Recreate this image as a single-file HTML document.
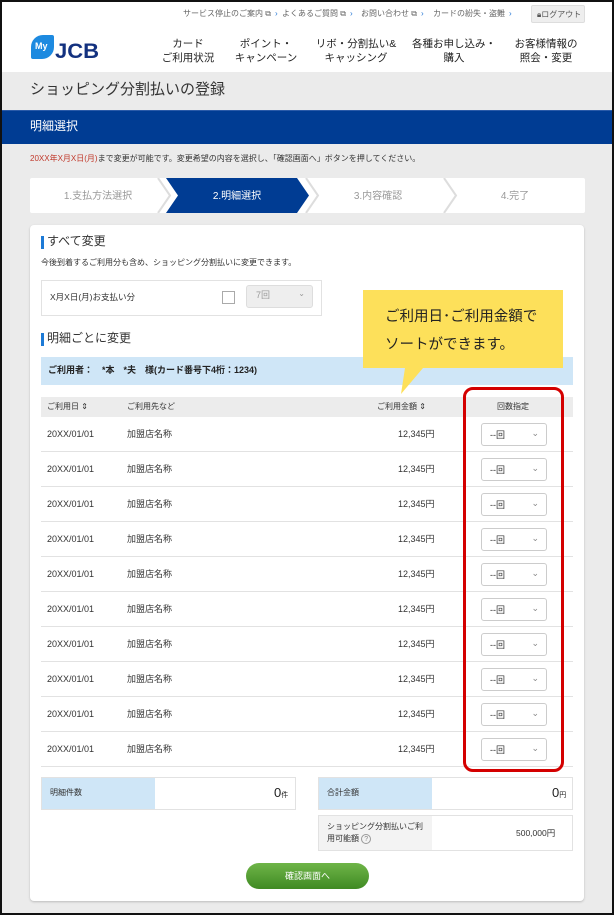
<!DOCTYPE html>
<html><head><meta charset="utf-8"><style>
*{box-sizing:border-box;margin:0;padding:0}
body{width:614px;height:915px;position:relative;overflow:hidden;background:#ebebeb;font-family:"Liberation Sans","Noto Sans CJK JP",sans-serif;color:#333;line-height:1.2}
.a{position:absolute}
.frame{position:absolute;left:0;top:0;width:614px;height:915px;border:2px solid #111;z-index:50;pointer-events:none}
.tl{font-size:8px;color:#666;top:9px;white-space:nowrap}
.tl b{color:#2a7ad6;font-weight:normal;margin-left:4px}
.nav{font-size:10.5px;text-align:center;line-height:14px;color:#222;top:37px;white-space:nowrap}
.row{left:41px;width:532px;height:35px;border-bottom:1px solid #e2e2e2;font-size:9px;color:#333;background:#fff}
.row span{position:absolute;top:11px;line-height:12px}
.sel{position:absolute;left:440px;top:6px;width:66px;height:23px;border:1px solid #ccc;border-radius:3px;background:#fff;font-size:9px;line-height:12px;padding:5px 0 0 8px}
.sel:after{content:"⌄";position:absolute;right:7px;top:3px;font-size:9px;color:#888}
</style></head><body>
<div class="frame"></div>
<div class="a" style="left:0;top:0;width:614px;height:30px;background:#fff"></div>
<div class="a tl" style="left:183px">サービス停止のご案内 ⧉<b>›</b></div>
<div class="a tl" style="left:282px">よくあるご質問 ⧉<b>›</b></div>
<div class="a tl" style="left:361px">お問い合わせ ⧉<b>›</b></div>
<div class="a tl" style="left:433px">カードの紛失・盗難<b>›</b></div>
<div class="a" style="left:531px;top:5px;width:54px;height:18px;background:#eee;border:1px solid #ddd;border-radius:2px;font-size:8px;color:#555;padding:4px 0 0 5px;white-space:nowrap">&#x1F512;&#xFE0E;ログアウト</div>
<div class="a" style="left:0;top:30px;width:614px;height:42px;background:#fff"></div>
<div class="a" style="left:31px;top:35px;width:23px;height:24px;background:#1d8ae0;border-radius:12px 2px 12px 2px;color:#fff;font-size:9px;font-weight:bold;padding:6px 0 0 4px">My</div>
<div class="a" style="left:55px;top:39px;font-size:21px;font-weight:bold;color:#13317f;transform:scaleX(1.05);transform-origin:left">JCB</div>
<div class="a nav" style="left:160px;width:56px">カード<br>ご利用状況</div>
<div class="a nav" style="left:234px;width:64px">ポイント・<br>キャンペーン</div>
<div class="a nav" style="left:311px;width:90px">リボ・分割払い&amp;<br>キャッシング</div>
<div class="a nav" style="left:409px;width:90px">各種お申し込み・<br>購入</div>
<div class="a nav" style="left:508px;width:76px">お客様情報の<br>照会・変更</div>
<div class="a" style="left:30px;top:81px;font-size:15px;color:#333">ショッピング分割払いの登録</div>
<div class="a" style="left:0;top:110px;width:614px;height:34px;background:#003c93;border-top:1px solid #2a5aa8"></div>
<div class="a" style="left:30px;top:119px;font-size:12px;color:#fff">明細選択</div>
<div class="a" style="left:30px;top:154px;font-size:8px;color:#333;white-space:nowrap"><span style="color:#c0392b">20XX年X月X日(月)</span>まで変更が可能です。変更希望の内容を選択し、「確認画面へ」ボタンを押してください。</div>
<svg class="a" style="left:30px;top:178px" width="555" height="35">
<rect x="0" y="0" width="555" height="35" fill="#fff" rx="2"/>
<polygon points="136,0 267,0 279,17.5 267,35 136,35 148,17.5" fill="#003c93"/>
<polyline points="128,0 140,17.5 128,35" fill="none" stroke="#ddd" stroke-width="2"/>
<polyline points="276,0 288,17.5 276,35" fill="none" stroke="#ddd" stroke-width="2"/>
<polyline points="414,0 426,17.5 414,35" fill="none" stroke="#ddd" stroke-width="2"/>
<g font-size="10" text-anchor="middle" font-family="Liberation Sans,Noto Sans CJK JP,sans-serif">
<text x="68" y="21" fill="#999">1.支払方法選択</text>
<text x="207" y="21" fill="#fff">2.明細選択</text>
<text x="348" y="21" fill="#999">3.内容確認</text>
<text x="485" y="21" fill="#999">4.完了</text></g>
</svg>
<div class="a" style="left:30px;top:225px;width:554px;height:676px;background:#fff;border-radius:4px;box-shadow:0 1px 2px #bbb"></div>
<div class="a" style="left:41px;top:236px;width:3px;height:13px;background:#1d7ad6"></div>
<div class="a" style="left:47px;top:234px;font-size:12px">すべて変更</div>
<div class="a" style="left:41px;top:258px;font-size:8px">今後到着するご利用分も含め、ショッピング分割払いに変更できます。</div>
<div class="a" style="left:41px;top:280px;width:281px;height:36px;border:1px solid #e2e2e2"></div>
<div class="a" style="left:50px;top:292px;font-size:8.5px">X月X日(月)お支払い分</div>
<div class="a" style="left:222px;top:291px;width:13px;height:13px;border:1px solid #aaa;background:#fff"></div>
<div class="a" style="left:246px;top:285px;width:67px;height:23px;border:1px solid #ddd;border-radius:3px;background:#eee;font-size:9px;color:#999;padding:4px 0 0 9px">7回<span style="position:absolute;right:7px;top:3px;font-size:8px">⌄</span></div>
<div class="a" style="left:41px;top:333px;width:3px;height:13px;background:#1d7ad6"></div>
<div class="a" style="left:47px;top:331px;font-size:12px">明細ごとに変更</div>
<div class="a" style="left:41px;top:357px;width:532px;height:28px;background:#cfe6f7"></div>
<div class="a" style="left:48px;top:365px;font-size:9px;font-weight:bold;color:#222;white-space:nowrap">ご利用者：　*本　*夫　様(カード番号下4桁：1234)</div>
<div class="a" style="left:41px;top:397px;width:532px;height:20px;background:#ececec;font-size:8px">
<span class="a" style="left:6px;top:5px">ご利用日 ⇕</span><span class="a" style="left:86px;top:5px">ご利用先など</span><span class="a" style="left:336px;top:5px">ご利用金額 ⇕</span><span class="a" style="left:456px;top:5px">回数指定</span></div>
<div class="a row" style="top:417px"><span style="left:6px">20XX/01/01</span><span style="left:86px">加盟店名称</span><span style="left:357px">12,345円</span><div class="sel">--回</div></div>
<div class="a row" style="top:452px"><span style="left:6px">20XX/01/01</span><span style="left:86px">加盟店名称</span><span style="left:357px">12,345円</span><div class="sel">--回</div></div>
<div class="a row" style="top:487px"><span style="left:6px">20XX/01/01</span><span style="left:86px">加盟店名称</span><span style="left:357px">12,345円</span><div class="sel">--回</div></div>
<div class="a row" style="top:522px"><span style="left:6px">20XX/01/01</span><span style="left:86px">加盟店名称</span><span style="left:357px">12,345円</span><div class="sel">--回</div></div>
<div class="a row" style="top:557px"><span style="left:6px">20XX/01/01</span><span style="left:86px">加盟店名称</span><span style="left:357px">12,345円</span><div class="sel">--回</div></div>
<div class="a row" style="top:592px"><span style="left:6px">20XX/01/01</span><span style="left:86px">加盟店名称</span><span style="left:357px">12,345円</span><div class="sel">--回</div></div>
<div class="a row" style="top:627px"><span style="left:6px">20XX/01/01</span><span style="left:86px">加盟店名称</span><span style="left:357px">12,345円</span><div class="sel">--回</div></div>
<div class="a row" style="top:662px"><span style="left:6px">20XX/01/01</span><span style="left:86px">加盟店名称</span><span style="left:357px">12,345円</span><div class="sel">--回</div></div>
<div class="a row" style="top:697px"><span style="left:6px">20XX/01/01</span><span style="left:86px">加盟店名称</span><span style="left:357px">12,345円</span><div class="sel">--回</div></div>
<div class="a row" style="top:732px"><span style="left:6px">20XX/01/01</span><span style="left:86px">加盟店名称</span><span style="left:357px">12,345円</span><div class="sel">--回</div></div>
<div class="a" style="left:463px;top:387px;width:101px;height:385px;border:3px solid #d40000;border-radius:10px;z-index:5"></div>
<svg class="a" style="left:363px;top:290px;z-index:6" width="200" height="105">
<polygon points="0,0 200,0 200,78 60,78 38,104 42,78 0,78" fill="#fde05a"/>
<text x="22" y="31" font-size="14.5" fill="#222" font-family="Liberation Sans,Noto Sans CJK JP,sans-serif">ご利用日･ご利用金額で</text>
<text x="22" y="59" font-size="14.5" fill="#222" font-family="Liberation Sans,Noto Sans CJK JP,sans-serif">ソートができます。</text>
</svg>
<div class="a" style="left:41px;top:777px;width:255px;height:33px;border:1px solid #e2e2e2;background:#fff"></div>
<div class="a" style="left:42px;top:778px;width:113px;height:31px;background:#cfe6f7;font-size:8px;padding:10px 0 0 8px">明細件数</div>
<div class="a" style="left:274px;top:785px;font-size:13px;color:#222">0<span style="font-size:7px">件</span></div>
<div class="a" style="left:318px;top:777px;width:255px;height:33px;border:1px solid #e2e2e2;background:#fff"></div>
<div class="a" style="left:319px;top:778px;width:113px;height:31px;background:#cfe6f7;font-size:8px;padding:10px 0 0 8px">合計金額</div>
<div class="a" style="left:552px;top:785px;font-size:13px;color:#222">0<span style="font-size:7px">円</span></div>
<div class="a" style="left:318px;top:815px;width:255px;height:36px;border:1px solid #e2e2e2;background:#fff"></div>
<div class="a" style="left:319px;top:816px;width:113px;height:34px;background:#f3f3f3;font-size:8px;padding:5px 4px 0 8px;line-height:12px">ショッピング分割払いご利用可能額 <span style="display:inline-block;width:10px;height:10px;border:1px solid #999;border-radius:50%;font-size:7px;text-align:center;line-height:9px;color:#888">?</span></div>
<div class="a" style="left:516px;top:828px;font-size:8.5px">500,000円</div>
<div class="a" style="left:246px;top:863px;width:123px;height:26px;border-radius:13px;background:linear-gradient(#6fb548,#3f8a23);color:#fff;font-size:9px;text-align:center;line-height:26px">確認画面へ</div>
</body></html>
